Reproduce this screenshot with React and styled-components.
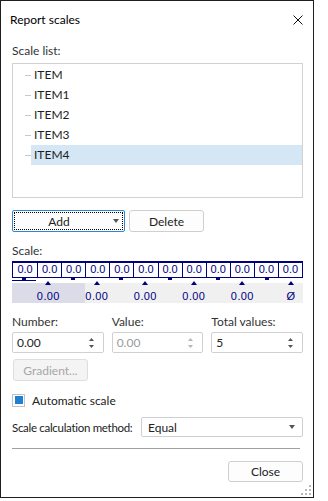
import React from "react";
import styled, { createGlobalStyle } from "styled-components";

const GlobalStyle = createGlobalStyle`
  html, body {
    margin: 0;
    padding: 0;
    background: #fff;
  }
  body {
    font-family: Lato, "Liberation Sans", sans-serif;
    font-size: 12px;
    color: #1a1a1a;
  }
`;

const NAVY = "#000080";

const Dialog = styled.div`
  position: relative;
  width: 314px;
  height: 498px;
  box-sizing: border-box;
  border: 1px solid #1f1f1f;
  background: #fff;
  display: flex;
  flex-direction: column;
`;

const TitleBar = styled.div`
  height: 37px;
  display: flex;
  align-items: center;
  justify-content: space-between;
  padding: 0 10px 0 9px;
`;

const Title = styled.span`
  color: #000;
  font-size: 12px;
`;

const Content = styled.div`
  display: flex;
  flex-direction: column;
  padding: 0 10px 0 11px;
`;

const Label = styled.div`
  line-height: 16px;
  height: 16px;
  color: #333;
  white-space: nowrap;
  margin-top: ${(p) => p.$top || 0}px;
`;

const TreeBox = styled.div`
  margin-top: 4px;
  height: 135px;
  box-sizing: border-box;
  border: 1px solid #d2d2d2;
  padding-top: 1px;
`;

const TreeRow = styled.div`
  display: flex;
  align-items: center;
  height: 20px;
  padding-left: 12px;
`;

const TreeDash = styled.span`
  width: 6px;
  height: 1px;
  background: #c8c8c8;
`;

const TreeText = styled.span`
  flex: 1;
  height: 20px;
  line-height: 20px;
  padding-left: 3px;
  color: #1e1e1e;
  background: ${(p) => (p.$selected ? "#d5e7f5" : "transparent")};
`;

const ButtonRow = styled.div`
  margin-top: 12px;
  display: flex;
  gap: 4px;
`;

const Button = styled.button`
  box-sizing: border-box;
  width: ${(p) => p.$width}px;
  height: ${(p) => p.$height || 22}px;
  margin: 0;
  padding: 0;
  display: flex;
  align-items: center;
  justify-content: center;
  font: inherit;
  color: ${(p) => (p.disabled ? "#a6a6a6" : "#222")};
  background: ${(p) => (p.disabled ? "#f4f4f4" : "#fdfdfd")};
  border: 1px solid ${(p) => (p.disabled ? "#dedede" : "#cfcfcf")};
  border-radius: 3px;
`;

const SplitButton = styled(Button)`
  border-color: #2f86d6;
  border-radius: 2px;
  outline: 1px dotted #000;
  outline-offset: -3px;
`;

const SplitLabel = styled.span`
  flex: 1;
  text-align: center;
  padding-right: 8px;
`;

const SmallArrow = styled.span`
  width: 0;
  height: 0;
  border-left: 3.5px solid transparent;
  border-right: 3.5px solid transparent;
  border-top: 4px solid ${(p) => p.$color || "#555"};
  margin-right: ${(p) => p.$right || 5}px;
`;

const ScaleCells = styled.div`
  margin-top: 2px;
  height: 17px;
  box-sizing: border-box;
  display: grid;
  grid-template-columns: repeat(12, 1fr);
  border: 1px solid ${NAVY};
  border-top-width: 2px;
`;

const ScaleCell = styled.div`
  border-left: ${(p) => (p.$first ? "none" : `1px solid ${NAVY}`)};
  font-family: "Liberation Sans", Arial, sans-serif;
  font-size: 11px;
  line-height: 13px;
  color: ${NAVY};
  text-align: center;
`;

const TickRow = styled.div`
  height: 3px;
  display: grid;
  grid-template-columns: repeat(12, 1fr);
`;

const TickCell = styled.div`
  display: flex;
  justify-content: center;
  align-items: flex-start;
  box-sizing: border-box;
  border-bottom: ${(p) => (p.$underline ? `1px solid ${NAVY}` : "none")};
`;

const Tick = styled.span`
  width: 4px;
  height: 2px;
  background: ${NAVY};
`;

const Band = styled.div`
  height: 22px;
  display: grid;
  grid-template-columns: repeat(12, 1fr);
`;

const BandCell = styled.div`
  display: flex;
  flex-direction: column;
  align-items: center;
  background: linear-gradient(
    #fff 0 2px,
    ${(p) => (p.$active ? "#dcdce9" : "#f0f0f0")} 2px
  );
`;

const Marker = styled.span`
  width: 0;
  height: 0;
  border-left: 3.5px solid transparent;
  border-right: 3.5px solid transparent;
  border-bottom: 4px solid ${NAVY};
`;

const MarkerValue = styled.span`
  margin-top: 5px;
  font-family: "Liberation Sans", Arial, sans-serif;
  font-size: 11px;
  line-height: 13px;
  letter-spacing: 0.4px;
  color: ${NAVY};
  white-space: nowrap;
`;

const FieldGrid = styled.div`
  margin-top: 11px;
  display: grid;
  grid-template-columns: repeat(3, 1fr);
  column-gap: 8px;
`;

const Field = styled.div`
  display: flex;
  flex-direction: column;
`;

const SpinBox = styled.div`
  margin-top: 2px;
  height: 21px;
  box-sizing: border-box;
  border: 1px solid #d0d0d0;
  border-radius: 2px;
  display: flex;
  align-items: center;
  padding: 0 8px 0 4px;
  color: ${(p) => (p.$disabled ? "#9a9a9a" : "#222")};
`;

const SpinValue = styled.span`
  flex: 1;
`;

const GradientButton = styled(Button)`
  margin-top: 6px;
  margin-left: 1px;
`;

const CheckRow = styled.label`
  margin-top: 9px;
  height: 20px;
  display: flex;
  align-items: center;
  gap: 7px;
  color: #222;
`;

const CheckBox = styled.span`
  width: 13px;
  height: 13px;
  box-sizing: border-box;
  border: 1px solid #c4c4c4;
  display: flex;
  align-items: center;
  justify-content: center;
`;

const CheckMark = styled.span`
  width: 8px;
  height: 8px;
  background: #1e80d2;
`;

const MethodRow = styled.div`
  margin-top: 7px;
  height: 20px;
  display: grid;
  grid-template-columns: 1fr 162px;
  align-items: center;
  color: #222;
`;

const MethodLabel = styled.span`
  white-space: nowrap;
  font-size: 11.5px;
  letter-spacing: -0.3px;
`;

const Combo = styled.div`
  height: 20px;
  box-sizing: border-box;
  border: 1px solid #cfcfcf;
  border-radius: 2px;
  display: flex;
  align-items: center;
  padding-left: 6px;
`;

const ComboText = styled.span`
  flex: 1;
`;

const Separator = styled.div`
  margin-top: 11px;
  margin-right: 3px;
  height: 1px;
  background: #a0a0a0;
`;

const Footer = styled.div`
  margin-top: 12px;
  display: flex;
  justify-content: flex-end;
`;

const Grip = styled.svg`
  position: absolute;
  right: 2px;
  bottom: 2px;
`;

const items = ["ITEM", "ITEM1", "ITEM2", "ITEM3", "ITEM4"];
const markers = ["0.00", "0.00", "0.00", "0.00", "0.00", "Ø"];

const Spinner = ({ color }) => (
  <svg width="7" height="12" viewBox="0 0 7 12">
    <polygon points="3.5,1 6,4 1,4" fill={color} />
    <polygon points="1,8 6,8 3.5,11" fill={color} />
  </svg>
);

export default function App() {
  const cells = Array.from({ length: 12 }, (_, i) => i);
  return (
    <>
      <GlobalStyle />
      <Dialog>
        <TitleBar>
          <Title>Report scales</Title>
          <svg width="10" height="10" viewBox="0 0 10 10">
            <path d="M0.5 0.5 L9.5 9.5 M9.5 0.5 L0.5 9.5" stroke="#111" strokeWidth="1" />
          </svg>
        </TitleBar>
        <Content>
          <Label $top={5}>Scale list:</Label>
          <TreeBox>
            {items.map((item, i) => (
              <TreeRow key={item}>
                <TreeDash />
                <TreeText $selected={i === items.length - 1}>{item}</TreeText>
              </TreeRow>
            ))}
          </TreeBox>

          <ButtonRow>
            <SplitButton $width={113}>
              <SplitLabel>Add</SplitLabel>
              <SmallArrow $right={5} />
            </SplitButton>
            <Button $width={75}>Delete</Button>
          </ButtonRow>

          <Label $top={11}>Scale:</Label>
          <ScaleCells>
            {cells.map((i) => (
              <ScaleCell key={i} $first={i === 0}>
                0.0
              </ScaleCell>
            ))}
          </ScaleCells>
          <TickRow>
            {cells.map((i) => (
              <TickCell key={i} $underline={i === 0}>
                {i % 2 === 0 && <Tick />}
              </TickCell>
            ))}
          </TickRow>
          <Band>
            {cells.map((i) => (
              <BandCell key={i} $active={i < 3}>
                {i % 2 === 1 && (
                  <>
                    <Marker />
                    <MarkerValue>{markers[(i - 1) / 2]}</MarkerValue>
                  </>
                )}
              </BandCell>
            ))}
          </Band>

          <FieldGrid>
            <Field>
              <Label>Number:</Label>
              <SpinBox>
                <SpinValue>0.00</SpinValue>
                <Spinner color="#555" />
              </SpinBox>
            </Field>
            <Field>
              <Label>Value:</Label>
              <SpinBox $disabled>
                <SpinValue>0.00</SpinValue>
                <Spinner color="#b5b5b5" />
              </SpinBox>
            </Field>
            <Field>
              <Label>Total values:</Label>
              <SpinBox>
                <SpinValue>5</SpinValue>
                <Spinner color="#555" />
              </SpinBox>
            </Field>
          </FieldGrid>

          <GradientButton $width={75} disabled>
            Gradient...
          </GradientButton>

          <CheckRow>
            <CheckBox>
              <CheckMark />
            </CheckBox>
            Automatic scale
          </CheckRow>

          <MethodRow>
            <MethodLabel>Scale calculation method:</MethodLabel>
            <Combo>
              <ComboText>Equal</ComboText>
              <SmallArrow $right={7} />
            </Combo>
          </MethodRow>

          <Separator />

          <Footer>
            <Button $width={75} $height={21}>
              Close
            </Button>
          </Footer>
        </Content>
        <Grip width="10" height="10" viewBox="0 0 10 10">
          <g fill="#b8b8b8">
            <rect x="8" y="0" width="2" height="2" />
            <rect x="4" y="4" width="2" height="2" />
            <rect x="8" y="4" width="2" height="2" />
            <rect x="0" y="8" width="2" height="2" />
            <rect x="4" y="8" width="2" height="2" />
            <rect x="8" y="8" width="2" height="2" />
          </g>
        </Grip>
      </Dialog>
    </>
  );
}
